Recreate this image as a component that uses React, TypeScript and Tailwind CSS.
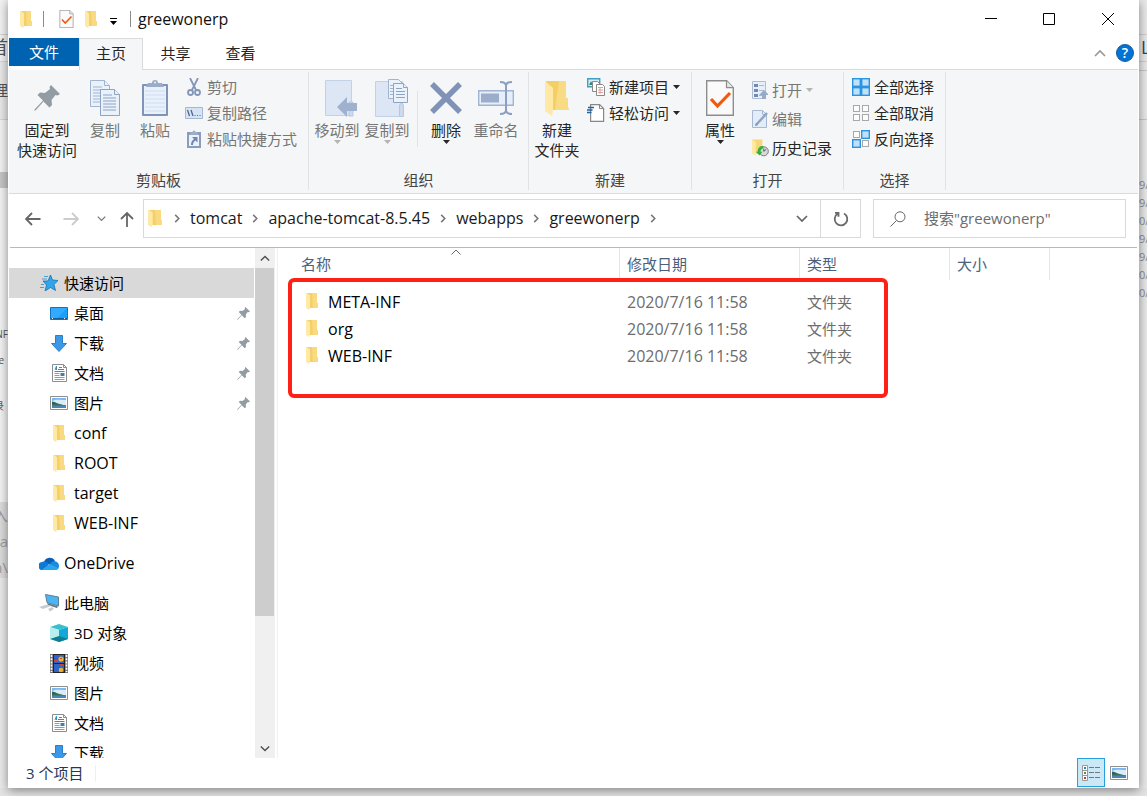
import React from 'react';

type IconProps = { className?: string };

/* ---------- icons ---------- */

const Folder: React.FC<IconProps> = ({ className = 'w-3 h-[17px]' }) => (
  <svg viewBox="0 0 12 17" className={className} preserveAspectRatio="none">
    <path d="M1 0h10v10h1v5H3z" fill="#f4d06a" />
    <path d="M6 0h5v10h1v5H7z" fill="#f9da80" />
    <path d="M0 0h1l3 2.500V15l-1 2-3-2z" fill="#ffe9a6" />
  </svg>
);

const CheckDoc: React.FC<IconProps> = ({ className }) => (
  <svg viewBox="0 0 28 36" className={className} fill="none">
    <path d="M.7.7h20l6.6 7v27.6H.7z" fill="#fafafa" stroke="#8d8d8d" strokeWidth="1.4" />
    <path d="M20.5.7v7h6.8" fill="#e6e6e6" stroke="#8d8d8d" strokeWidth="1.2" />
    <path d="M5 19l6.500 7L24 13" stroke="#f0590f" strokeWidth="3.200" />
  </svg>
);

const Pin: React.FC<IconProps> = ({ className = 'w-[13px] h-[13px]' }) => (
  <svg viewBox="0 0 26 26" className={className} fill="#929ca3">
    <path d="M17 0l9 9-2.500 1.500-2-.500-4 5 .500 5-2.500 2.500-6-6L2 25l-2 1 1-2 8-8.500-5.500-5.500L6 7.500l5 .500 5-4-.500-2z" />
  </svg>
);

const CopyIcon: React.FC<IconProps> = ({ className = 'w-[30px] h-9' }) => (
  <svg viewBox="0 0 30 36" className={className} fill="#e9f1fb" stroke="#a3b4d0">
    <path d="M.5.5h14l5 5v21h-19z" />
    <path d="M14.500.500v5h5M3 7h9M3 10h13M3 13h13M3 16h13M3 19h13M3 22h13" />
    <path d="M10.500 9.500h14l5 5v21h-19z" stroke="#8fa3c4" />
    <path d="M24.500 9.500v5h5M13 15h9M13 18h13M13 21h13M13 24h13M13 27h13M13 30h13" stroke="#8fa3c4" />
  </svg>
);

const PasteIcon: React.FC<IconProps> = ({ className = 'w-[26px] h-9' }) => (
  <svg viewBox="0 0 26 36" className={className}>
    <rect x="0" y="4" width="26" height="32" rx="1" fill="#8094b8" />
    <path d="M2 6h22v28H2z" fill="#e8f0fc" />
    <path d="M3 11h20M3 15h20M3 19h20M3 23h20M3 27h20M3 31h20" stroke="#d0dcec" />
    <path d="M6 3h4a3 3 0 016 0h4l2 4H4z" fill="#9cacc7" />
    <circle cx="13" cy="2.500" r="1" fill="#e8f0fc" />
  </svg>
);

const CutIcon = () => (
  <svg viewBox="0 0 18 18" className="w-[18px] h-[18px]" fill="none" stroke="#8296b9">
    <path d="M5 0l6 12M13 0L7 12" strokeWidth="1.800" />
    <circle cx="5.500" cy="14.500" r="2.500" strokeWidth="1.800" />
    <circle cx="12.500" cy="14.500" r="2.500" strokeWidth="1.800" />
  </svg>
);

const PathIcon = () => (
  <svg viewBox="0 0 18 12" className="w-[18px] h-3" fill="none">
    <path d="M.5.5h17v11H.5z" fill="#d5e3f5" stroke="#a5b7d3" />
    <path d="M2.500 3l2 6M6 3l2 6" stroke="#506891" strokeWidth="1.300" />
    <path d="M9.500 8.500h1M12 8.500h1M14.500 8.500h1" stroke="#506891" />
  </svg>
);

const ShortcutIcon = () => (
  <svg viewBox="0 0 18 18" className="w-[18px] h-[18px]">
    <path d="M2 2h14v16H2z" fill="#8a9dbf" />
    <path d="M4 5h10v11H4z" fill="#eaf2fc" />
    <path d="M6 2h1.500a1.500 1.500 0 013 0H12l1 3H5z" fill="#9caec9" />
    <path d="M7 7h5.500v5.500l-2-2c-1.500 1-2.500 2-2.500 4.500H6c0-3 1-4.500 3-6z" fill="#6f86ae" />
  </svg>
);

const MoveToIcon = () => (
  <svg viewBox="-8 0 40 37" className="w-10 h-[37px]">
    <path d="M.5.500h26v35H.500z" fill="#dce6f4" stroke="#c3d1e6" />
    <path d="M24 22h4v14h-4z" fill="#cddaec" stroke="#b9c8e0" />
    <path d="M12 27l10-10v6h10v8H22v6z" fill="#a0b1ce" />
  </svg>
);

const CopyToIcon = () => (
  <svg viewBox="-8 0 41 38" className="w-[41px] h-[38px]" fill="#eaf2fc" stroke="#8fa3c4">
    <path d="M.5 2.500h27v35H.500z" fill="#dce6f4" stroke="#c3d1e6" />
    <path d="M24.500 26l2-2 2 2v11.500h-4z" fill="#cddaec" stroke="#b9c8e0" />
    <path d="M13.500.500h10l4 4v15h-14z" stroke="#a3b4d0" />
    <path d="M15 6.500h8M15 9.500h8M15 12.500h8M15 15.500h8" stroke="#a3b4d0" />
    <path d="M18.500 4.500h10l4 4v15h-14z" />
    <path d="M28.500 4.500v4h4M21 9.500h6M21 12.500h9M21 15.500h9M21 18.500h9" />
  </svg>
);

const DeleteIcon = () => (
  <svg viewBox="0 0 32 32" className="w-8 h-8" stroke="#8093b6" strokeWidth="5.500">
    <path d="M2 2l28 28M30 2L2 30" />
  </svg>
);

const RenameIcon = () => (
  <svg viewBox="0 0 36 34" className="w-9 h-[34px]" fill="none">
    <path d="M.7 9.700h34.600v14.600H.700z" fill="#e5effb" stroke="#a3b4d0" strokeWidth="1.400" />
    <path d="M3 12.500h18v9H3z" fill="#9cadca" />
    <path d="M22 1c4 0 6 1 6 4 0-3 2-4 6-4M28 4v26M22 33c4 0 6-1 6-4 0 3 2 4 6 4" stroke="#8c9fc0" strokeWidth="2" />
  </svg>
);

const NewFolderIcon = () => (
  <svg viewBox="0 0 24 36" className="w-6 h-9">
    <path d="M1 1h20v17h2v9l1 3H6z" fill="#f3cf66" />
    <path d="M14 1h7v17h2v12H10z" fill="#f9db83" />
    <path d="M0 1l8 7v22l-1 6-7-5z" fill="#ffe9a5" />
  </svg>
);

const NewItemIcon = () => (
  <svg viewBox="0 0 18 18" className="w-[18px] h-[18px]" fill="#fff">
    <path d="M.7.700h12v8h-12z" fill="#d5eefa" stroke="#3f9ec4" strokeWidth="1.400" />
    <path d="M2 7l2-4 2 4z" fill="#3f8565" />
    <path d="M5.500 3.500h5l3 3v7h-8z" stroke="#888" />
    <path d="M9.500 6.500h6l2 2v9h-8z" stroke="#888" />
    <path d="M11 9.500h5M11 12h5M11 14.500h5M13 9v7" stroke="#e0a09c" />
  </svg>
);

const EasyAccessIcon = () => (
  <svg viewBox="0 0 18 18" className="w-[18px] h-[18px]" fill="none">
    <path d="M3.600.600h9l4 4v12.800h-13z" fill="#fff" stroke="#888" strokeWidth="1.200" />
    <path d="M12.500.600v4h4" stroke="#888" />
    <path d="M1 3.500h6M0 6h5.500M0 8.500h4.500" stroke="#1e64a8" strokeWidth="1.300" />
  </svg>
);

const OpenIcon = () => (
  <svg viewBox="0 0 16 18" className="w-4 h-[18px]" fill="none">
    <path d="M.5.500h13v17H.500z" fill="#e6effa" stroke="#adbdd6" />
    <path d="M2 3h4v3H2zM2 8h4v3H2zM2 13h4v3H2z" fill="#7389af" />
    <path d="M7 4.500h5M7 9.500h5M7 14.500h3" stroke="#a7b8d2" />
    <path d="M12 9l5 5h-3v4h-4v-4H7z" fill="#98aac9" />
  </svg>
);

const EditIcon = () => (
  <svg viewBox="0 0 16 18" className="w-4 h-[18px]" fill="none">
    <path d="M.5.500h10l4 4v13H.500z" fill="#e3edf9" stroke="#a7b8d2" />
    <path d="M10.500.500v4h4" stroke="#a7b8d2" />
    <path d="M4 15L15 3" stroke="#8fa3c4" strokeWidth="2.400" />
    <path d="M3 16l1-3 2 2z" fill="#8094b8" />
  </svg>
);

const HistoryIcon = () => (
  <svg viewBox="0 0 18 18" className="w-[17px] h-[18px]" fill="none">
    <path d="M0 0h11v15H3z" fill="#f7d778" />
    <path d="M0 0l4 3v14l-4-2z" fill="#ffe9a5" />
    <circle cx="12.500" cy="12.500" r="4.800" fill="#d8d8d8" stroke="#777" />
    <path d="M12.500 9.500v3l2.500-2" stroke="#555" />
    <path d="M12 7c-4 0-6 2-6 6H4l4 4 3-4H9c0-2 1-3 3-4z" fill="#30b13c" />
  </svg>
);

const SelectIcon: React.FC<{ on: boolean[] }> = ({ on }) => {
  const cells = [[0, 0], [9, 0], [0, 9], [9, 9]];
  // unselected cells go first so the blue outlines stay on top
  const order = [0, 1, 2, 3].sort((a, b) => Number(on[a]) - Number(on[b]));
  return (
    <svg viewBox="0 0 18 18" className="w-[18px] h-[18px]">
      {order.map(i => (
        <rect
          key={i}
          x={cells[i][0] + (on[i] ? 0.7 : 1.5)}
          y={cells[i][1] + (on[i] ? 0.7 : 1.5)}
          width={on[i] ? 7.6 : 6}
          height={on[i] ? 7.6 : 6}
          fill={on[i] ? '#bfe2fb' : '#fcfcfc'}
          stroke={on[i] ? '#2b93e0' : '#a8a8a8'}
          strokeWidth={on[i] ? 1.4 : 1}
        />
      ))}
    </svg>
  );
};

const Chevron: React.FC<IconProps & { dir: 'up' | 'down' | 'right' }> = ({ dir, className = '' }) => {
  const d = { up: 'M1 7l5-5 5 5', down: 'M1 2l5 5 5-5', right: 'M4 1l4 4-4 4' }[dir];
  return (
    <svg viewBox={dir === 'right' ? '0 0 12 10' : '0 0 12 9'} className={`w-3 h-[9px] ${className}`} fill="none" stroke="currentColor" strokeWidth="1.700">
      <path d={d} />
    </svg>
  );
};

const Caret: React.FC<IconProps> = ({ className = '' }) => (
  <svg viewBox="0 0 7 4" className={`w-[7px] h-1 ${className}`} fill="currentColor">
    <path d="M0 0h7L3.500 4z" />
  </svg>
);

const StarIcon = () => (
  <svg viewBox="0 0 18 16" className="w-[18px] h-4">
    <path d="M10.500 0l2 5 5.500.500-4 4 1.500 6-5-3-5.500 3.500 1.500-6-3.500-4H8z" fill="#31a5ec" stroke="#1272b6" strokeWidth=".8" />
    <path d="M4 1.500h4M2 4h5M1 9.500h3M0 12.500h4" stroke="#2d8fd0" strokeWidth=".8" />
  </svg>
);

const DesktopIcon = () => (
  <svg viewBox="0 0 18 13" className="w-[18px] h-[13px]">
    <path d="M.5.500h17v12H.500z" fill="#18a0fb" stroke="#1172bd" />
    <path d="M17 1L7 11H1V1z" fill="#32abff" />
    <path d="M1 11.500h16" stroke="#0f5f9f" />
    <path d="M2 11.500h2M14 11.500h2" stroke="#fff" strokeDasharray="1 1" />
  </svg>
);

const DownloadIcon = () => (
  <svg viewBox="0 0 16 17" className="w-4 h-[17px]">
    <path d="M4.500.500h7v8h4L8 16.500.500 8.500h4z" fill="#3b97e8" stroke="#2a7fc9" />
  </svg>
);

const DocIcon = () => (
  <svg viewBox="0 0 15 18" className="w-[15px] h-[18px]" fill="none">
    <path d="M.5.500h11l3 3v14H.500z" fill="#fff" stroke="#8d8d8d" />
    <path d="M11.500.500v3h3" stroke="#8d8d8d" />
    <path d="M3 6l1.500-4V6M7 3.500h3M6 5.500h6M2.500 7.500h10" stroke="#2b93c9" />
    <path d="M2.500 9.500h5M2.500 11.500h5M2.500 13.500h10M2.500 15.500h10" stroke="#999" />
    <path d="M8.500 9h4v3h-4z" fill="#3a80b8" />
  </svg>
);

const PictureIcon = () => (
  <svg viewBox="0 0 18 14" className="w-[18px] h-[14px]">
    <path d="M.5.500h17v13H.500z" fill="#fff" stroke="#8f8f8f" />
    <path d="M2 2h14v10H2z" fill="#7db6f2" />
    <path d="M2 5c4-2 8-1 14-1v5H2z" fill="#d9ecf8" />
    <path d="M2 5.500c3 0 6 3 14 4H2z" fill="#2f6455" />
    <path d="M2 9h14v3H2z" fill="#4c86b4" />
    <path d="M2 8.500h9l5 1.200H2z" fill="#417a60" />
  </svg>
);

const CloudIcon = () => (
  <svg viewBox="0 0 20 13" className="w-5 h-[13px]">
    <path d="M5 5a6 6 0 0111-1l-4 4-6-2z" fill="#0a5fb8" />
    <path d="M4 13a4 4 0 01-1-8c3-1 5 0 7 2l-4 6z" fill="#0f78d4" />
    <path d="M12 5.500c3-2.500 8-1 8 3.500 0 3-2 4-4 4H9z" fill="#1a8ae0" />
    <path d="M3 12.500L11 7l8 4c-1 1.500-2 2-3 2H5z" fill="#28a8ea" />
  </svg>
);

const PcIcon = () => (
  <svg viewBox="0 0 20 18" className="w-5 h-[18px]">
    <path d="M6.500.500L19.500 3v9L8 8.500z" fill="#4bb4f5" stroke="#5f7f95" />
    <path d="M8 9l11 3.500-1 1.500-9-3z" fill="#5a7488" />
    <path d="M0 13l8-2.500 4 1.500-8 3zM9 15l4-2 2 2-4 2.500z" fill="#c5cdd2" />
  </svg>
);

const CubeIcon = () => (
  <svg viewBox="0 0 18 18" className="w-[18px] h-[18px]">
    <path d="M9 0l9 3-9 3-9-3z" fill="#37c0cf" />
    <path d="M0 3l9 3v12l-9-3z" fill="#b9eeee" />
    <path d="M18 3L9 6v12l9-3z" fill="#13a8d6" />
    <path d="M9 12l9 3-9 3-9-3z" fill="#0d7e94" />
  </svg>
);

const VideoIcon = () => (
  <svg viewBox="0 0 18 19" className="w-[18px] h-[19px]">
    <path d="M0 0h18v19H0z" fill="#777" />
    <path d="M3 0h12v19H3z" fill="#222" />
    <path d="M1.500 1v17M16.500 1v17" stroke="#fff" strokeWidth="1.600" strokeDasharray="2 1.200" />
    <path d="M4 1h10v8H4zM4 10h10v8H4z" fill="#2f63c9" />
    <circle cx="11" cy="5" r="2.600" fill="#e9b52c" />
    <circle cx="11" cy="16" r="2.300" fill="#e9b52c" />
    <path d="M4 6h4v2H4zM9.500 10h4l-2 3zM10 4h2v1h-2z" fill="#d9412b" />
  </svg>
);

const DetailsIcon = () => (
  <svg viewBox="0 0 18 16" className="w-[18px] h-4" fill="none">
    <path d="M.5.500h5v15h-5zM.5 5.500h5M.5 10.500h5" fill="#fff" stroke="#999" />
    <path d="M2 3h2" stroke="#2f7fb8" strokeWidth="2" />
    <path d="M2 8h2" stroke="#5c8a3c" strokeWidth="2" />
    <path d="M2 13h2" stroke="#b8412f" strokeWidth="2" />
    <path d="M7 2.500h5M13 2.500h5M7 7.500h5M13 7.500h5M7 12.500h5M13 12.500h5" stroke="#777" />
  </svg>
);

const Arrow: React.FC<{ d: string; className?: string }> = ({ d, className }) => (
  <svg viewBox="0 0 16 16" className={`w-4 h-4 ${className}`} fill="none" stroke="currentColor" strokeWidth="1.800">
    <path d={d} />
  </svg>
);

/* ---------- ribbon ---------- */

interface BigButtonProps {
  icon: React.ReactNode;
  lines: string[];
  disabled?: boolean;
  caret?: boolean;
  width?: string;
}

const BigButton: React.FC<BigButtonProps> = ({ icon, lines, disabled, caret, width = 'w-[50px]' }) => (
  <button className={`${width} flex flex-col items-center shrink-0 ${disabled ? 'text-[#767676]' : 'text-[#262626]'}`}>
    <span className="h-11 flex items-center justify-center">{icon}</span>
    {lines.map(line => (
      <span key={line} className="leading-5 whitespace-nowrap">{line}</span>
    ))}
    {caret && <Caret className={disabled ? 'text-[#b4b4b4]' : ''} />}
  </button>
);

interface SmallButtonProps {
  icon: React.ReactNode;
  label: string;
  disabled?: boolean;
  caret?: boolean;
  height?: string;
  iconWidth?: string;
}

const SmallButton: React.FC<SmallButtonProps> = ({ icon, label, disabled, caret, height = 'h-[26px]', iconWidth = 'w-[22px]' }) => (
  <button className={`${height} flex items-center whitespace-nowrap ${disabled ? 'text-[#767676]' : 'text-[#262626]'}`}>
    <span className={`${iconWidth} flex`}>{icon}</span>
    {label}
    {caret && <Caret className={disabled ? 'ml-1 text-[#b4b4b4]' : 'ml-1'} />}
  </button>
);

const Group: React.FC<{ label: string; width: string; children: React.ReactNode }> = ({ label, width, children }) => (
  <section className={`${width} shrink-0 flex flex-col border-r border-[#e1e2e4]`}>
    <div className="flex-1 flex items-start">{children}</div>
    <h2 className="h-5 leading-5 text-center text-[#444]">{label}</h2>
  </section>
);

const Ribbon = () => (
  <div className="h-[124px] shrink-0 flex bg-[#f5f6f7] border-b border-[#dadbdc] pt-[2px] pb-[3px]">
    <Group label="剪贴板" width="w-[300px]">
      <div className="flex pl-[5px] pt-1">
        <BigButton width="w-[66px]" icon={<Pin className="w-[26px] h-[26px]" />} lines={['固定到', '快速访问']} />
        <BigButton icon={<CopyIcon />} lines={['复制']} disabled />
        <BigButton icon={<PasteIcon />} lines={['粘贴']} disabled />
      </div>
      <div className="pl-[5px] pt-[2px]">
        <SmallButton icon={<CutIcon />} label="剪切" disabled />
        <SmallButton icon={<PathIcon />} label="复制路径" disabled />
        <SmallButton icon={<ShortcutIcon />} label="粘贴快捷方式" disabled />
      </div>
    </Group>
    <Group label="组织" width="w-[220px]">
      <div className="flex pl-[3px] pt-1">
        <BigButton icon={<MoveToIcon />} lines={['移动到']} disabled caret />
        <BigButton icon={<CopyToIcon />} lines={['复制到']} disabled caret />
        <div className="w-px h-14 ml-[5px] mr-[3px] mt-[15px] bg-[#e1e2e4]" />
        <BigButton icon={<DeleteIcon />} lines={['删除']} caret />
        <BigButton icon={<RenameIcon />} lines={['重命名']} disabled />
      </div>
    </Group>
    <Group label="新建" width="w-[163px]">
      <div className="pt-1">
        <BigButton width="w-14" icon={<NewFolderIcon />} lines={['新建', '文件夹']} />
      </div>
      <div className="pl-[2px] pt-[2px]">
        <SmallButton icon={<NewItemIcon />} label="新建项目" caret />
        <SmallButton icon={<EasyAccessIcon />} label="轻松访问" caret />
      </div>
    </Group>
    <Group label="打开" width="w-[152px]">
      <div className="pt-1">
        <BigButton width="w-14" icon={<CheckDoc className="w-7 h-9" />} lines={['属性']} caret />
      </div>
      <div className="pl-1 pt-[3px]">
        <SmallButton height="h-[29px]" iconWidth="w-5" icon={<OpenIcon />} label="打开" disabled caret />
        <SmallButton height="h-[29px]" iconWidth="w-5" icon={<EditIcon />} label="编辑" disabled />
        <SmallButton height="h-[29px]" iconWidth="w-5" icon={<HistoryIcon />} label="历史记录" />
      </div>
    </Group>
    <Group label="选择" width="w-[102px]">
      <div className="pl-2 pt-[2px]">
        <SmallButton icon={<SelectIcon on={[true, true, true, true]} />} label="全部选择" />
        <SmallButton icon={<SelectIcon on={[false, false, false, false]} />} label="全部取消" />
        <SmallButton icon={<SelectIcon on={[false, true, true, false]} />} label="反向选择" />
      </div>
    </Group>
  </div>
);

/* ---------- navigation ---------- */

interface NavItem {
  label: string;
  icon: React.ReactNode;
  root?: boolean;
  selected?: boolean;
  pinned?: boolean;
  latin?: boolean;
}

const navItems: NavItem[] = [
  { label: '快速访问', icon: <StarIcon />, root: true, selected: true },
  { label: '桌面', icon: <DesktopIcon />, pinned: true },
  { label: '下载', icon: <DownloadIcon />, pinned: true },
  { label: '文档', icon: <DocIcon />, pinned: true },
  { label: '图片', icon: <PictureIcon />, pinned: true },
  { label: 'conf', icon: <Folder />, latin: true },
  { label: 'ROOT', icon: <Folder />, latin: true },
  { label: 'target', icon: <Folder />, latin: true },
  { label: 'WEB-INF', icon: <Folder />, latin: true },
  { label: 'OneDrive', icon: <CloudIcon />, root: true, latin: true },
  { label: '此电脑', icon: <PcIcon />, root: true },
  { label: '3D 对象', icon: <CubeIcon /> },
  { label: '视频', icon: <VideoIcon /> },
  { label: '图片', icon: <PictureIcon /> },
  { label: '文档', icon: <DocIcon /> },
  { label: '下载', icon: <DownloadIcon /> },
];

const NavPane = () => (
  <nav className="w-[245px] shrink-0 overflow-hidden pt-5">
    <ul>
      {navItems.map((item, index) => (
        <li key={index} className={item.root && !item.selected ? 'mt-[10px]' : ''}>
          <a
            href="#"
            className={`h-[30px] flex items-center text-black ${item.root ? 'pl-[29px]' : 'pl-10'} ${item.selected ? 'bg-[#d9d9d9]' : ''} ${item.latin ? 'text-base leading-5' : ''}`}
          >
            <span className={`flex justify-center shrink-0 mr-1 ${item.root ? 'w-[22px]' : 'w-5'}`}>{item.icon}</span>
            <span className={`flex-1 ${item.root ? '' : 'pl-px'}`}>{item.label}</span>
            {item.pinned && <Pin className="w-[13px] h-[13px] mr-1" />}
          </a>
        </li>
      ))}
    </ul>
  </nav>
);

const ScrollBar = () => (
  <div className="w-5 shrink-0 ml-px flex flex-col bg-[#f0f0f0] text-[#505050]">
    <button aria-label="Scroll up" className="h-5 flex items-center justify-center"><Chevron dir="up" className="w-[10px]" /></button>
    <div className="flex-1 mr-px">
      <div className="h-[74%] bg-[#cdcdcd]" />
    </div>
    <button aria-label="Scroll down" className="h-5 flex items-center justify-center"><Chevron dir="down" className="w-[10px]" /></button>
  </div>
);

/* ---------- file list ---------- */

const files = [
  { name: 'META-INF', modified: '2020/7/16 11:58', type: '文件夹' },
  { name: 'org', modified: '2020/7/16 11:58', type: '文件夹' },
  { name: 'WEB-INF', modified: '2020/7/16 11:58', type: '文件夹' },
];

const headers = ['名称', '修改日期', '类型', '大小'];

const FileList = () => (
  <main className="relative flex-1 min-w-0 ml-[2px] border-l border-[#f0f0f0]">
    <svg viewBox="0 0 10 6" className="absolute left-[173px] top-px w-[10px] h-[6px]" fill="none" stroke="#666">
      <path d="M.5 5.500L5 1l4.500 4.500" />
    </svg>
    <table className="w-full table-fixed text-left">
      <colgroup>
        <col className="w-[342px]" />
        <col className="w-[180px]" />
        <col className="w-[150px]" />
        <col className="w-[100px]" />
        <col />
      </colgroup>
      <thead>
        <tr>
          {headers.map((header, i) => (
            <th key={header} className="h-10 p-0 align-top font-normal text-[#4c607a]">
              <div className={`h-8 leading-8 border-r border-[#e5e5e5] ${i === 0 ? 'pl-[23px]' : 'pl-[7px]'}`}>{header}</div>
            </th>
          ))}
          <td />
        </tr>
      </thead>
      <tbody>
        {files.map(file => (
          <tr key={file.name} className="h-[27px] text-[#6d6d6d]">
            <td className="p-0 pl-7 text-base leading-5 text-black">
              <div className="flex items-center gap-[10px]"><Folder />{file.name}</div>
            </td>
            <td className="p-0 pl-[7px] text-base leading-5">{file.modified}</td>
            <td className="p-0 pl-[7px]">{file.type}</td>
            <td />
            <td />
          </tr>
        ))}
      </tbody>
    </table>
    <div className="absolute left-[10px] top-[30px] w-[600px] h-[120px] rounded-md border-4 border-[#ff2116]" />
  </main>
);

/* ---------- window parts ---------- */

const TitleBar = () => (
  <header className="h-[38px] shrink-0 flex items-center pl-[11px]">
    <Folder />
    <div className="w-px h-4 ml-[11px] mr-[15px] bg-[#8a8a8a]" />
    <button aria-label="属性"><CheckDoc className="w-[15px] h-[18px]" /></button>
    <button aria-label="新建文件夹" className="ml-[11px]"><Folder /></button>
    <button aria-label="自定义" className="ml-[13px] flex flex-col items-center gap-[2px] pt-1">
      <span className="w-[7px] h-px bg-black" />
      <Caret />
    </button>
    <div className="w-px h-4 ml-[13px] mr-[7px] bg-[#8a8a8a]" />
    <h1 className="flex-1 text-base leading-5 text-[#111]">greewonerp</h1>
    <button aria-label="最小化" className="w-[58px] flex justify-center">
      <svg viewBox="0 0 12 12" className="w-3 h-3" stroke="#000"><path d="M0 5.500h12" /></svg>
    </button>
    <button aria-label="最大化" className="w-[58px] flex justify-center">
      <svg viewBox="0 0 12 12" className="w-3 h-3" fill="none" stroke="#000"><path d="M.5.500h11v11H.500z" /></svg>
    </button>
    <button aria-label="关闭" className="w-[60px] flex justify-center">
      <svg viewBox="0 0 12 12" className="w-3 h-3" stroke="#000"><path d="M0 0l12 12M12 0L0 12" /></svg>
    </button>
  </header>
);

const TabBar = () => (
  <div className="h-8 shrink-0 flex text-[#262626]">
    <button className="w-[70px] h-7 bg-[#0063b1] text-white">文件</button>
    <div className="flex-1 flex">
      <button className="w-16 pb-[3px] border border-b-0 border-[#dadbdc] bg-[#f5f6f7]">主页</button>
      <button className="w-[65px] pb-px border-b border-[#dadbdc]">共享</button>
      <button className="w-[65px] pb-px border-b border-[#dadbdc]">查看</button>
      <div className="flex-1 flex items-center justify-end gap-[10px] pr-1 pb-px border-b border-[#dadbdc]">
        <button aria-label="最小化功能区"><Chevron dir="up" className="text-[#999]" /></button>
        <button aria-label="帮助" className="w-[18px] h-[18px] rounded-full bg-[#0074d4] border border-[#1a5c9a] text-white text-sm leading-4 font-semibold">?</button>
      </div>
    </div>
  </div>
);

const crumbs = ['tomcat', 'apache-tomcat-8.5.45', 'webapps', 'greewonerp'];

const AddressBar = () => (
  <div className="h-[54px] shrink-0 flex items-center pl-[15px] pr-[11px] mx-px pb-1 border-b border-[#b9b9b9]">
    <button aria-label="后退" className="text-[#666]"><Arrow d="M15.500 8H1M7 2L1 8l6 6" /></button>
    <button aria-label="前进" className="ml-[22px] text-[#ccc]"><Arrow d="M.5 8H15M9 2l6 6-6 6" /></button>
    <button aria-label="最近浏览的位置" className="ml-[18px] text-[#777]"><Chevron dir="down" className="w-[9px]" /></button>
    <button aria-label="上移" className="ml-[13px] text-[#666]"><Arrow d="M8 16V2M2 8l6-6 6 6" /></button>
    <div className="flex-1 h-[39px] ml-2 flex items-center border border-[#d9d9d9] pl-1 text-base leading-5">
      <Folder className="w-[14px] h-[17px] mr-[2px]" />
      {crumbs.map(crumb => (
        <React.Fragment key={crumb}>
          <Chevron dir="right" className="ml-[7px] mr-[7px] text-[#777]" />
          <button className="pb-[2px] text-[#1a1a1a]">{crumb}</button>
        </React.Fragment>
      ))}
      <Chevron dir="right" className="mx-[7px] text-[#777]" />
      <button aria-label="以前的位置" className="ml-auto mr-3 text-[#666]"><Chevron dir="down" /></button>
      <button aria-label="刷新" className="w-10 h-full flex items-center justify-center border-l border-[#d9d9d9] text-[#6b6b6b]">
        <svg viewBox="0 0 16 16" className="w-4 h-4" fill="none" stroke="currentColor" strokeWidth="1.800">
          <path d="M11 2.500a6.300 6.300 0 11-6.500.300M2 1.800h3.500v4" />
        </svg>
      </button>
    </div>
    <label className="w-[253px] h-[39px] ml-3 flex items-center border border-[#d9d9d9] pl-4">
      <svg viewBox="0 0 16 16" className="w-4 h-4" fill="none" stroke="#666">
        <circle cx="10" cy="5.800" r="5" />
        <path d="M6.500 9.500L.500 15.500" />
      </svg>
      <input aria-label="搜索" placeholder={'搜索"greewonerp"'} className="flex-1 min-w-0 ml-[18px] pb-[2px] outline-none placeholder:text-[#6d6d6d]" />
    </label>
  </div>
);

const StatusBar = () => (
  <footer className="h-[30px] shrink-0 flex items-center pl-[17px] pr-[10px] pb-px text-[#1e395b]">
    <span className="pr-3 leading-4 border-r border-[#eee]">3 个项目</span>
    <button aria-label="详细信息" className="w-7 h-[29px] ml-auto flex items-center justify-center border border-[#26a0da] bg-[#cbe8f6]">
      <DetailsIcon />
    </button>
    <button aria-label="大缩略图" className="ml-[5px]"><PictureIcon /></button>
  </footer>
);

const LeftBackdrop = () => (
  <aside className="w-2 shrink-0 overflow-hidden flex flex-col items-end bg-[#f3f3f3] text-[#555] whitespace-nowrap">
    <div className="h-[34px] shrink-0" />
    <div className="h-7 w-full shrink-0 flex justify-end border-y border-[#d5d5d5] text-lg leading-6">首</div>
    <div className="h-[58px] w-full shrink-0 flex justify-end border-b border-[#d5d5d5] bg-[#e9e9e9] leading-[56px]">理</div>
    <div className="h-[52px] shrink-0" />
    <div className="h-4 w-full shrink-0 bg-[#c6c6c6]" />
    <div className="h-[314px] w-full shrink-0 flex flex-col items-end pt-[136px] text-[10px]">
      <span className="h-[26px]">NF</span>
      <span className="h-[46px] pr-1">e</span>
      <span className="pr-1">录</span>
    </div>
    <div className="h-[76px] w-full shrink-0 flex flex-col items-end bg-[#dcdcdc] text-[#a0a0a0] leading-[26px]">
      <span>入</span>
      <span>na</span>
      <span>n\</span>
    </div>
    <div className="flex-1 w-full bg-[#ebebeb]" />
  </aside>
);

const RightBackdrop = () => (
  <aside className="w-2 shrink-0 overflow-hidden bg-[#eaeaea] text-[#8a8a8a] whitespace-nowrap">
    <div className="h-[34px]" />
    <div className="h-7 border-y border-[#d0d0d0] text-lg leading-6 pl-[2px] text-[#444]">L</div>
    <div className="h-[50px] border-y border-[#c8c8c8] mt-2" />
    <div className="h-14" />
    {['9/', '9/', '0/', '9/', '9/', '0/', '0/'].map((text, i) => (
      <div key={i} className="h-[18px] text-[11px] leading-[18px]">{text}</div>
    ))}
  </aside>
);

export default function App() {
  return (
    <div className="h-screen flex flex-col overflow-hidden bg-[#e4e4e4] text-[15px] leading-5 font-['Open_Sans','Noto_Sans_CJK_SC',sans-serif]">
      <div className="flex-1 min-h-0 flex">
        <LeftBackdrop />
        <div className="relative flex-1 min-w-0 flex flex-col bg-white px-px shadow-[0_2px_10px_rgba(0,0,0,0.45)]">
          <TitleBar />
          <TabBar />
          <Ribbon />
          <AddressBar />
          <div className="flex-1 min-h-0 flex">
            <NavPane />
            <ScrollBar />
            <FileList />
          </div>
          <StatusBar />
        </div>
        <RightBackdrop />
      </div>
      <div className="h-2 shrink-0" />
    </div>
  );
}
